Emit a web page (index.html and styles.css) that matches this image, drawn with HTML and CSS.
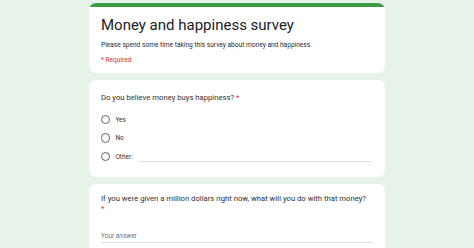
FILE: index.html
```html
<!DOCTYPE html>
<html>
<head>
<meta charset="utf-8">
<link rel="stylesheet" href="styles.css">
</head>
<body>
<div class="form">
  <div class="card head">
    <div class="bar"></div>
    <div class="head-body">
      <h1 class="title">Money and happiness survey</h1>
      <p class="desc">Please spend some time taking this survey about money and happiness.</p>
      <p class="req">* Required</p>
    </div>
  </div>
  <div class="card q q1">
    <div class="qtext">Do you believe money buys happiness? <span class="star">*</span></div>
    <div class="opts">
      <div class="opt"><span class="radio"></span><span class="lbl">Yes</span></div>
      <div class="opt"><span class="radio"></span><span class="lbl">No</span></div>
      <div class="opt"><span class="radio"></span><span class="lbl">Other:</span><span class="other-line"></span></div>
    </div>
  </div>
  <div class="card q q2">
    <div class="qtext">If you were given a million dollars right now, what will you do with that money?<br><span class="star">*</span></div>
    <div class="answer">Your answer</div>
  </div>
</div>
</body>
</html>
```
FILE: styles.css
```css
html, body {
  margin: 0;
  padding: 0;
  background: #e7f3e9;
  font-family: Roboto, "Liberation Sans", sans-serif;
  color: #202124;
}
.form {
  width: 296px;
  margin: 3px auto 0;
  display: flex;
  flex-direction: column;
  gap: 7px;
}
.card {
  background: #fff;
  border-radius: 7px;
  overflow: hidden;
}
.bar {
  height: 4px;
  background: #3d9b48;
}
.head-body {
  padding: 9px 12px 8px;
}
.title {
  margin: 0;
  font-size: 15px;
  font-weight: 400;
  line-height: 18px;
  color: #202124;
}
.desc {
  margin: 7px 0 0;
  font-size: 6.6px;
  line-height: 9px;
  color: #2a2b2e;
}
.req {
  margin: 6px 0 0;
  font-size: 6.6px;
  line-height: 9px;
  color: #d93025;
}
.q {
  padding: 13px 10px 14.8px 12px;
}
.q2 {
  padding-top: 10px;
}
.qtext {
  font-size: 7.7px;
  line-height: 10px;
  color: #303134;
}
.star {
  color: #d93025;
}
.opts {
  display: flex;
  flex-direction: column;
  gap: 7.5px;
  margin-top: 11.2px;
}
.opt {
  display: flex;
  align-items: center;
  height: 11px;
}
.radio {
  width: 7.4px;
  height: 7.4px;
  margin-left: -0.4px;
  border: 1.2px solid #5f6368;
  border-radius: 50%;
  flex: none;
}
.lbl {
  font-size: 6.5px;
  margin-left: 5.4px;
  color: #303134;
}
.other-line {
  flex: 1;
  margin-left: 6px;
  margin-right: 3px;
  align-self: flex-end;
  border-bottom: 1px solid #e0e0e0;
}
.answer {
  margin-top: 18.5px;
  margin-right: 2px;
  font-size: 6.5px;
  line-height: 8px;
  color: #70757a;
  padding-bottom: 2px;
  border-bottom: 1px solid #e0e0e0;
}
```
